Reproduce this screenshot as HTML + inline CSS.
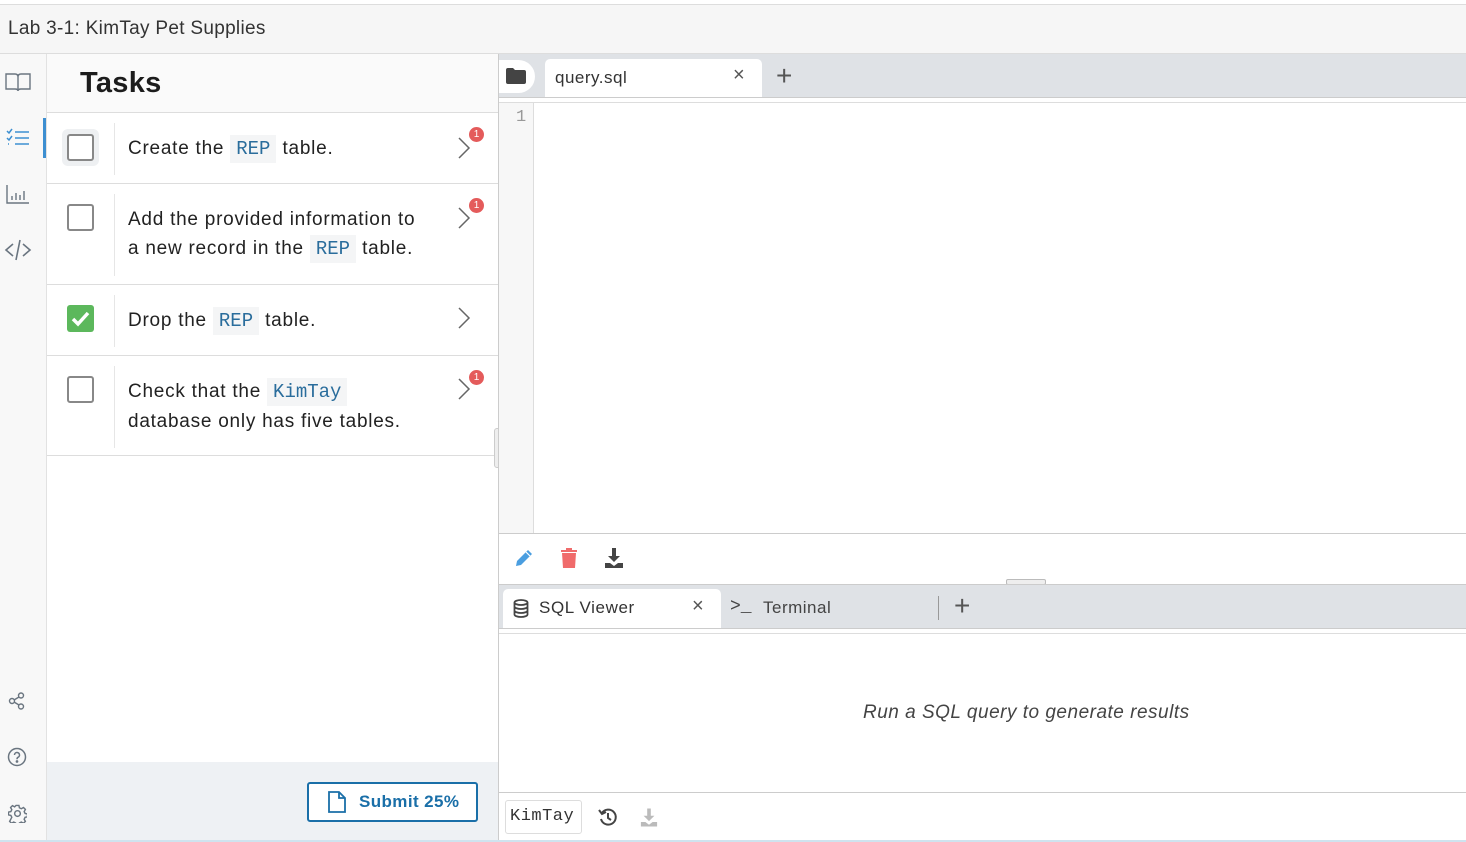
<!DOCTYPE html>
<html><head><style>
*{box-sizing:border-box;margin:0;padding:0}
body{width:1466px;height:842px;position:relative;overflow:hidden;background:#fff;font-family:"Liberation Sans",sans-serif;color:#222}
.a{position:absolute}
.code{font-family:"Liberation Mono",monospace;color:#2a6d9c;background:#f4f5f6;padding:3px 6px;letter-spacing:0}
.row{position:absolute;left:47px;width:451px;border-bottom:1px solid #ddd}
.cb{position:absolute;left:20px;width:27px;height:27px;border:2px solid #888;border-radius:3px;background:#fff}
.vl{position:absolute;left:67px;width:1px;background:#e6e6e6}
.txt{position:absolute;left:81px;font-size:19px;line-height:29px;color:#222;letter-spacing:0.75px;white-space:nowrap}
.chev{position:absolute;left:410px}
.badge{position:absolute;left:422px;width:15px;height:15px;border-radius:50%;background:#e45b5b;color:#fff;font-size:10px;text-align:center;line-height:15px}
</style></head><body>
<div class="a" style="left:0;top:4px;width:1466px;height:50px;background:#f6f6f6;border-top:1px solid #ddd;border-bottom:1px solid #ddd"></div>
<div class="a" style="left:8px;top:18px;font-size:19px;color:#333;letter-spacing:0.3px">Lab 3-1: KimTay Pet Supplies</div>

<div class="a" style="left:0;top:54px;width:47px;height:786px;background:#f8f8f8;border-right:1px solid #e2e2e2"></div>
<div class="a" style="left:43px;top:118px;width:3px;height:40px;background:#3d8fd1"></div>
<svg class="a" style="left:5px;top:72px" width="26" height="20" viewBox="0 0 26 20" fill="none" stroke="#6a7580" stroke-width="1.4"><path d="M1 2h9q3 0 3 3v14q0-2-3-2H1z M25 2h-9q-3 0-3 3v14q0-2 3-2h9z"/></svg>
<svg class="a" style="left:6px;top:128px" width="24" height="20" viewBox="0 0 24 20" fill="none" stroke="#3d8fd1" stroke-width="1.5"><path d="M1 3l2 2 3-4M9 4h14M9 10h14M9 16h14M1 10l2 2 3-4M2 16h1"/></svg>
<svg class="a" style="left:6px;top:184px" width="24" height="20" viewBox="0 0 24 20" fill="none" stroke="#6a7580" stroke-width="1.4"><path d="M1 1v18h22M6 16v-4M10 16v-7M14 16v-5M18 16v-9"/></svg>
<svg class="a" style="left:4px;top:239px" width="28" height="22" viewBox="0 0 28 22" fill="none" stroke="#6a7580" stroke-width="1.6"><path d="M9 5l-7 6 7 6M19 5l7 6-7 6M16 1l-4 20"/></svg>
<svg class="a" style="left:8px;top:692px" width="18" height="18" viewBox="0 0 18 18" fill="none" stroke="#6a7580" stroke-width="1.4"><circle cx="4" cy="9" r="2.5"/><circle cx="13" cy="3.5" r="2.5"/><circle cx="13" cy="14.5" r="2.5"/><path d="M6 8l5-3M6 10l5 3"/></svg>
<svg class="a" style="left:7px;top:747px" width="20" height="20" viewBox="0 0 20 20" fill="none" stroke="#6a7580" stroke-width="1.5"><circle cx="10" cy="10" r="8.5"/><path d="M7.5 8a2.5 2.5 0 1 1 3.5 2.3c-.8.4-1 1-1 2"/><circle cx="10" cy="14.5" r=".6" fill="#6a7580"/></svg>
<svg class="a" style="left:8px;top:804px" width="19" height="19" viewBox="0 0 20 20" fill="none" stroke="#6a7580" stroke-width="1.5"><circle cx="10" cy="10" r="3"/><path d="M8.5 1.5h3l.5 2.5 2 1 2.3-1.3 2 2-1.3 2.3 1 2 2.5.5v3l-2.5.5-1 2 1.3 2.3-2 2-2.3-1.3-2 1-.5 2.5h-3l-.5-2.5-2-1-2.3 1.3-2-2L4 14l-1-2-2.5-.5v-3L3 8l1-2-1.3-2.3 2-2L7 3l1-1z"/></svg>

<div class="a" style="left:47px;top:54px;width:451px;height:59px;background:#fafafa;border-bottom:1px solid #ddd"></div>
<div class="a" style="left:80px;top:67px;font-size:29px;font-weight:bold;color:#1c1c1c;letter-spacing:0.3px">Tasks</div>

<div class="row" style="top:113px;height:71px">
 <div class="a" style="left:15px;top:16px;width:37px;height:37px;background:#eef0f2;border-radius:6px"></div>
 <div class="cb" style="top:21px"></div>
 <div class="vl" style="top:10px;height:52px"></div>
 <div class="txt" style="top:21px">Create the <span class="code">REP</span> table.</div>
 <svg class="chev" style="top:23px" width="14" height="24" viewBox="0 0 14 24" fill="none" stroke="#666" stroke-width="1.5"><path d="M2 2l10 10-10 10"/></svg>
 <div class="badge" style="top:14px">1</div>
</div>
<div class="row" style="top:184px;height:101px">
 <div class="cb" style="top:20px"></div>
 <div class="vl" style="top:10px;height:82px"></div>
 <div class="txt" style="top:21px">Add the provided information to<br>a new record in the <span class="code">REP</span> table.</div>
 <svg class="chev" style="top:22px" width="14" height="24" viewBox="0 0 14 24" fill="none" stroke="#666" stroke-width="1.5"><path d="M2 2l10 10-10 10"/></svg>
 <div class="badge" style="top:14px">1</div>
</div>
<div class="row" style="top:285px;height:71px">
 <div class="a" style="left:20px;top:20px;width:27px;height:27px;background:#5cb85c;border-radius:3px"></div>
 <svg class="a" style="left:23px;top:24px" width="21" height="19" viewBox="0 0 21 19" fill="none" stroke="#fff" stroke-width="3.5"><path d="M3 10l5 5 10-11"/></svg>
 <div class="vl" style="top:10px;height:52px"></div>
 <div class="txt" style="top:21px">Drop the <span class="code">REP</span> table.</div>
 <svg class="chev" style="top:21px" width="14" height="24" viewBox="0 0 14 24" fill="none" stroke="#666" stroke-width="1.5"><path d="M2 2l10 10-10 10"/></svg>
</div>
<div class="row" style="top:356px;height:100px">
 <div class="cb" style="top:20px"></div>
 <div class="vl" style="top:10px;height:82px"></div>
 <div class="txt" style="top:21px">Check that the <span class="code">KimTay</span><br>database only has five tables.</div>
 <svg class="chev" style="top:21px" width="14" height="24" viewBox="0 0 14 24" fill="none" stroke="#666" stroke-width="1.5"><path d="M2 2l10 10-10 10"/></svg>
 <div class="badge" style="top:14px">1</div>
</div>
<div class="a" style="left:494px;top:428px;width:8px;height:40px;background:#eee;border:1px solid #ccc;border-radius:3px"></div>

<div class="a" style="left:47px;top:762px;width:451px;height:78px;background:#eef1f4"></div>
<div class="a" style="left:307px;top:782px;width:171px;height:40px;border:2px solid #1a6fa8;border-radius:3px;background:#fff"></div>
<svg class="a" style="left:328px;top:791px" width="18" height="22" viewBox="0 0 18 22" fill="none" stroke="#1a6fa8" stroke-width="1.8"><path d="M1 1h10l6 6v14H1z M11 1v6h6"/></svg>
<div class="a" style="left:359px;top:792px;font-size:17px;font-weight:bold;color:#1a6fa8;letter-spacing:0.4px">Submit 25%</div>
<div class="a" style="left:498px;top:54px;width:1px;height:786px;background:#ccc"></div>

<div class="a" style="left:499px;top:54px;width:967px;height:44px;background:#dfe2e6"></div>
<div class="a" style="left:499px;top:60px;width:36px;height:33px;background:#fff;border-radius:0 17px 17px 0"></div>
<svg class="a" style="left:506px;top:68px" width="20" height="16" viewBox="0 0 20 16"><path d="M0 2q0-2 2-2h5l2 2h9q2 0 2 2v10q0 2-2 2H2q-2 0-2-2z" fill="#444"/></svg>
<div class="a" style="left:545px;top:59px;width:217px;height:39px;background:#fff;border-radius:5px 5px 0 0"></div>
<div class="a" style="left:555px;top:68px;font-size:17px;color:#333;letter-spacing:0.5px">query.sql</div>
<div class="a" style="left:733px;top:64px;font-size:20px;color:#555">×</div>
<div class="a" style="left:776px;top:60px;font-size:28px;color:#555;font-weight:300">+</div>
<div class="a" style="left:499px;top:97px;width:967px;height:6px;background:#fff;border-top:1px solid #ccc;border-bottom:1px solid #ddd"></div>
<div class="a" style="left:499px;top:103px;width:35px;height:430px;background:#f7f7f7;border-right:1px solid #ddd"></div>
<div class="a" style="left:516px;top:108px;font-family:'Liberation Mono',monospace;font-size:17px;color:#999">1</div>
<div class="a" style="left:499px;top:533px;width:967px;height:1px;background:#ccc"></div>
<svg class="a" style="left:514px;top:548px" width="20" height="20" viewBox="0 0 20 20"><path d="M2 18l1-5L14 2l4 4L7 17z" fill="#4a9ee0"/><path d="M12 4l4 4" stroke="#fff" stroke-width="1.2"/></svg>
<svg class="a" style="left:560px;top:548px" width="18" height="20" viewBox="0 0 18 20"><path d="M1 2h16v2H1z M6 0h6v2H6z M2 5h14l-1 15H3z" fill="#f06b6b"/></svg>
<svg class="a" style="left:604px;top:548px" width="20" height="20" viewBox="0 0 20 20" fill="#444"><path d="M8 0h4v8h4l-6 6-6-6h4z M1 15h5l4 3 4-3h5v5H1z"/></svg>
<div class="a" style="left:1006px;top:579px;width:40px;height:6px;border:1px solid #bbb;border-radius:2px;background:#eee"></div>
<div class="a" style="left:499px;top:584px;width:967px;height:44px;background:#dfe2e6;border-top:1px solid #ccc"></div>
<div class="a" style="left:503px;top:589px;width:218px;height:39px;background:#fff;border-radius:5px 5px 0 0"></div>
<svg class="a" style="left:513px;top:599px" width="16" height="19" viewBox="0 0 16 19" fill="none" stroke="#444" stroke-width="1.8"><ellipse cx="8" cy="3.5" rx="6.5" ry="2.5"/><path d="M1.5 3.5v12c0 1.4 3 2.5 6.5 2.5s6.5-1.1 6.5-2.5v-12M1.5 7.5c0 1.4 3 2.5 6.5 2.5s6.5-1.1 6.5-2.5M1.5 11.5c0 1.4 3 2.5 6.5 2.5s6.5-1.1 6.5-2.5"/></svg>
<div class="a" style="left:539px;top:598px;font-size:17px;color:#333;letter-spacing:0.6px">SQL Viewer</div>
<div class="a" style="left:692px;top:595px;font-size:20px;color:#555">×</div>
<div class="a" style="left:730px;top:597px;font-size:18px;color:#444;font-family:'Liberation Mono',monospace">&gt;_</div>
<div class="a" style="left:763px;top:598px;font-size:17px;color:#444;letter-spacing:0.5px">Terminal</div>
<div class="a" style="left:938px;top:596px;width:1px;height:24px;background:#999"></div>
<div class="a" style="left:954px;top:590px;font-size:28px;color:#555">+</div>
<div class="a" style="left:499px;top:628px;width:967px;height:6px;background:#fff;border-top:1px solid #ccc;border-bottom:1px solid #ddd"></div>
<div class="a" style="left:863px;top:702px;font-size:19px;font-style:italic;color:#444;letter-spacing:0.5px">Run a SQL query to generate results</div>
<div class="a" style="left:499px;top:792px;width:967px;height:1px;background:#ccc"></div>
<div class="a" style="left:505px;top:800px;width:77px;height:34px;border:1px solid #ddd;border-radius:3px;background:#fff"></div>
<div class="a" style="left:510px;top:807px;font-family:'Liberation Mono',monospace;font-size:17px;color:#333;letter-spacing:0.5px">KimTay</div>
<svg class="a" style="left:598px;top:807px" width="20" height="20" viewBox="0 0 20 20" fill="none" stroke="#444" stroke-width="2"><path d="M4 6a7.5 7.5 0 1 1-1 6"/><path d="M1 3l3 4 4-2"/><path d="M10 6v5l3 2"/></svg>
<svg class="a" style="left:640px;top:808px" width="18" height="19" viewBox="0 0 20 20" fill="#bbb"><path d="M8 0h4v8h4l-6 6-6-6h4z M1 15h5l4 3 4-3h5v5H1z"/></svg>
<div class="a" style="left:0;top:840px;width:1466px;height:2px;background:#cfe3ef"></div>
</body></html>
